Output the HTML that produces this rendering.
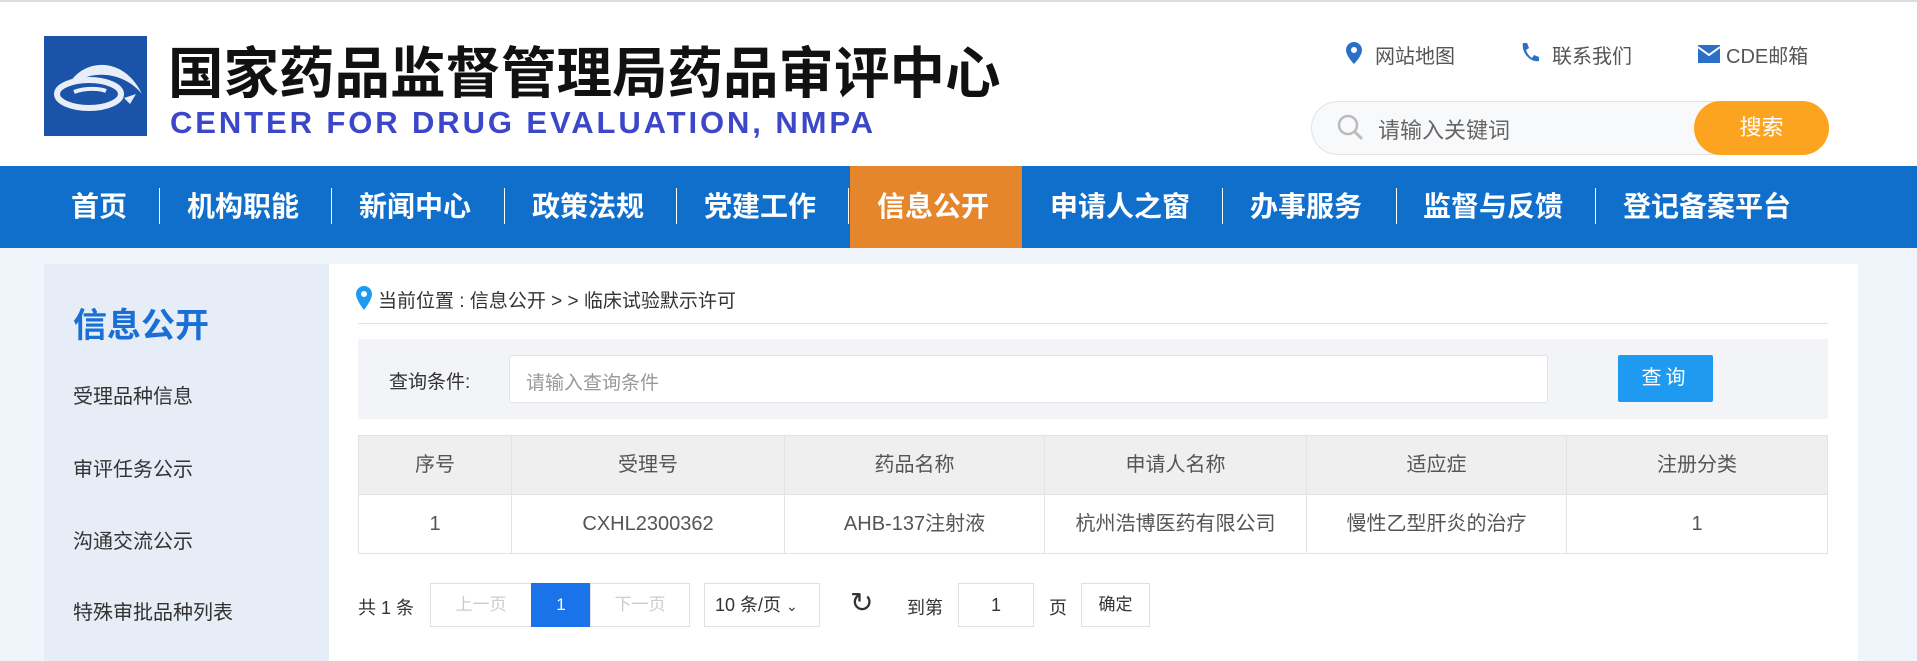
<!DOCTYPE html>
<html><head><meta charset="utf-8"><style>
*{margin:0;padding:0;box-sizing:border-box}
body{width:1917px;height:661px;overflow:hidden;background:#f0f5fc;font-family:"Liberation Sans","Noto Sans CJK SC",sans-serif;position:relative}
.a{position:absolute;white-space:nowrap}
.hdr{position:absolute;left:0;top:0;width:1917px;height:166px;background:#fff;border-top:2px solid #ddd}
.nav{position:absolute;left:0;top:166px;width:1917px;height:82px;background:#0f6fcb}
.ni{position:absolute;top:0;height:82px;line-height:82px;color:#fff;font-size:28px;font-weight:bold}
.sep{position:absolute;top:22px;width:1px;height:36px;background:#fff}
.side{position:absolute;left:44px;top:264px;width:285px;height:397px;background:#e6edf6}
.main{position:absolute;left:329px;top:264px;width:1529px;height:397px;background:#fff}
.si{position:absolute;left:73px;font-size:20px;color:#333}
td{border:1px solid #e3e3e3;text-align:center;font-size:20px;color:#555;vertical-align:middle;line-height:24px;padding:0}
.pb{position:absolute;top:583px;height:44px;border:1px solid #e0e0e0;background:#fff;font-size:17px;line-height:42px;text-align:center;color:#333}
</style></head><body>
<div class="hdr"></div>
<svg class="a" style="left:44px;top:36px" width="103" height="100" viewBox="0 0 103 100"><rect width="103" height="100" fill="#1a53a8"/><path d="M25 48 C40 22 80 20 98 58 C80 36 50 34 32 46 Z" fill="#e8eef8"/><ellipse cx="45" cy="58" rx="32" ry="14" fill="none" stroke="#e8eef8" stroke-width="6"/><path d="M30 56 C40 52 55 52 62 55" stroke="#e8eef8" stroke-width="4" fill="none"/><path d="M80 62 l12 -4 l-6 10z" fill="#e8eef8"/></svg>
<div class="a" style="left:168px;top:29px;font-size:55.5px;font-weight:bold;color:#111">国家药品监督管理局药品审评中心</div>
<div class="a" style="left:170px;top:105px;font-size:31px;font-weight:bold;color:#3b47c8;letter-spacing:2.9px">CENTER FOR DRUG EVALUATION, NMPA</div>
<svg class="a" style="left:1346px;top:42px" width="16" height="22" viewBox="0 0 16 22"><path d="M8 0C3.6 0 0 3.5 0 8c0 6 8 14 8 14s8-8 8-14c0-4.5-3.6-8-8-8zm0 11a3 3 0 1 1 0-6 3 3 0 0 1 0 6z" fill="#2b6fc6"/></svg>
<div class="a" style="left:1375px;top:40px;font-size:20px;color:#555">网站地图</div>
<svg class="a" style="left:1520px;top:42px" width="20" height="22" viewBox="0 0 20 22"><path d="M3 1l4 0 2 5-3 2c1 3 3 6 6 8l2-3 5 2v4c-8 2-18-8-16-18z" fill="#2b6fc6"/></svg>
<div class="a" style="left:1552px;top:40px;font-size:20px;color:#555">联系我们</div>
<svg class="a" style="left:1698px;top:45px" width="22" height="18" viewBox="0 0 22 18"><rect width="22" height="18" fill="#2b6fc6"/><path d="M0 2l11 8 11-8" stroke="#fff" stroke-width="2" fill="none"/></svg>
<div class="a" style="left:1726px;top:40px;font-size:20px;color:#555">CDE邮箱</div>
<div class="a" style="left:1311px;top:101px;width:517px;height:54px;border:1px solid #e3e3e3;border-radius:27px;background:#f8f9fb"></div>
<svg class="a" style="left:1336px;top:113px" width="30" height="30" viewBox="0 0 30 30"><circle cx="12" cy="12" r="9" fill="none" stroke="#bbb" stroke-width="2.5"/><path d="M19 19l7 7" stroke="#bbb" stroke-width="3"/></svg>
<div class="a" style="left:1378px;top:113px;font-size:22px;color:#666">请输入关键词</div>
<div class="a" style="left:1694px;top:101px;width:135px;height:54px;border-radius:27px;background:#fca31f;color:#fff;font-size:22px;line-height:54px;text-align:center">搜索</div>
<div class="nav">
<div class="a" style="left:850px;top:0;width:172px;height:82px;background:#e5862c"></div>
<div class="ni" style="left:71px">首页</div>
<div class="ni" style="left:187px">机构职能</div>
<div class="ni" style="left:359px">新闻中心</div>
<div class="ni" style="left:532px">政策法规</div>
<div class="ni" style="left:704px">党建工作</div>
<div class="ni" style="left:877px">信息公开</div>
<div class="ni" style="left:1050px">申请人之窗</div>
<div class="ni" style="left:1250px">办事服务</div>
<div class="ni" style="left:1423px">监督与反馈</div>
<div class="ni" style="left:1623px">登记备案平台</div>
<div class="sep" style="left:159px"></div><div class="sep" style="left:331px"></div><div class="sep" style="left:504px"></div><div class="sep" style="left:676px"></div><div class="sep" style="left:848px"></div><div class="sep" style="left:1222px"></div><div class="sep" style="left:1396px"></div><div class="sep" style="left:1595px"></div>
</div>
<div class="side"></div>
<div class="main"></div>
<div class="a" style="left:73px;top:298px;font-size:34px;font-weight:bold;color:#1a6fd6">信息公开</div>
<div class="si" style="top:380px">受理品种信息</div>
<div class="si" style="top:453px">审评任务公示</div>
<div class="si" style="top:525px">沟通交流公示</div>
<div class="si" style="top:596px">特殊审批品种列表</div>
<svg class="a" style="left:356px;top:286px" width="16" height="24" viewBox="0 0 16 24"><path d="M8 0C3.6 0 0 3.5 0 8c0 6 8 16 8 16s8-10 8-16c0-4.5-3.6-8-8-8zm0 11a3 3 0 1 1 0-6 3 3 0 0 1 0 6z" fill="#1e9bf0"/></svg>
<div class="a" style="left:378px;top:286px;font-size:19px;color:#333">当前位置 : 信息公开 &gt; &gt; 临床试验默示许可</div>
<div class="a" style="left:358px;top:323px;width:1470px;height:1px;background:#e3e3e3"></div>
<div class="a" style="left:358px;top:339px;width:1470px;height:80px;background:#f3f4f7"></div>
<div class="a" style="left:389px;top:367px;font-size:19px;color:#333">查询条件:</div>
<div class="a" style="left:509px;top:355px;width:1039px;height:48px;background:#fff;border:1px solid #e3e3e3;border-radius:3px"></div>
<div class="a" style="left:526px;top:368px;font-size:19px;color:#999">请输入查询条件</div>
<div class="a" style="left:1618px;top:355px;width:95px;height:47px;background:#1e9bf0;color:#fff;font-size:20px;line-height:47px;text-align:center;border-radius:2px;letter-spacing:4px">查询</div>
<table class="a" style="left:358px;top:435px;width:1470px;border-collapse:collapse;background:#fff">
<tr style="height:59px;background:#efefef"><td style="width:153px">序号</td><td style="width:273px">受理号</td><td style="width:260px">药品名称</td><td style="width:262px">申请人名称</td><td style="width:260px">适应症</td><td>注册分类</td></tr>
<tr style="height:59px"><td>1</td><td>CXHL2300362</td><td>AHB-137注射液</td><td>杭州浩博医药有限公司</td><td>慢性乙型肝炎的治疗</td><td>1</td></tr>
</table>
<div class="a" style="left:358px;top:594px;font-size:18px;color:#333">共 1 条</div>
<div class="pb" style="left:430px;width:102px;color:#ccc">上一页</div>
<div class="pb" style="left:531px;width:60px;background:#1a73e8;border-color:#1a73e8;color:#fff">1</div>
<div class="pb" style="left:590px;width:100px;color:#ccc">下一页</div>
<div class="pb" style="left:704px;width:116px;text-align:left;padding-left:10px;font-size:18px">10 条/页 <span style="font-size:14px">&#8964;</span></div>
<div class="a" style="left:850px;top:586px;font-size:28px;color:#333">&#8635;</div>
<div class="a" style="left:907px;top:594px;font-size:18px;color:#333">到第</div>
<div class="pb" style="left:958px;width:76px;font-size:18px">1</div>
<div class="a" style="left:1049px;top:594px;font-size:18px;color:#333">页</div>
<div class="pb" style="left:1081px;width:69px">确定</div>
</body></html>
